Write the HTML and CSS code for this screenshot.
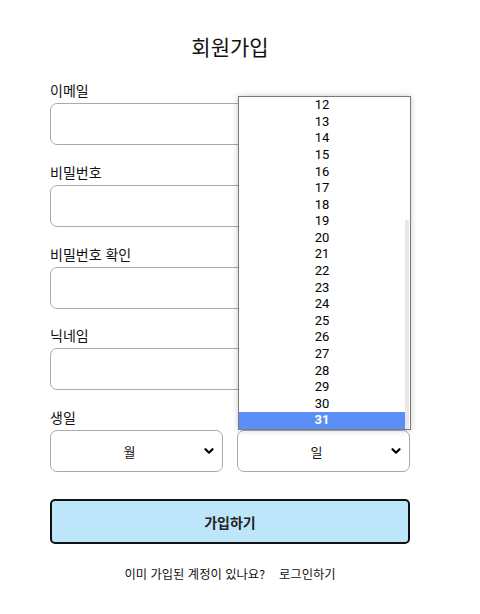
FILE: index.html
```html
<!DOCTYPE html>
<html lang="ko">
<head>
<meta charset="utf-8">
<title>회원가입</title>
<link rel="stylesheet" href="styles.css">
</head>
<body>
<main class="page">
  <h1 class="title">회원가입</h1>
  <div class="field">
    <label class="label">이메일</label>
    <div class="input"></div>
  </div>
  <div class="field">
    <label class="label">비밀번호</label>
    <div class="input"></div>
  </div>
  <div class="field">
    <label class="label">비밀번호 확인</label>
    <div class="input"></div>
  </div>
  <div class="field">
    <label class="label">닉네임</label>
    <div class="input"></div>
  </div>
  <div class="field">
    <label class="label">생일</label>
    <div class="selects">
      <div class="select"><span class="select-text">월</span><svg class="chev" viewBox="0 0 10 10" width="10" height="10"><path d="M1.5 3.2 L5 6.7 L8.5 3.2" fill="none" stroke="#000" stroke-width="2.2" stroke-linecap="round" stroke-linejoin="round"/></svg></div>
      <div class="select day"><span class="select-text">일</span><svg class="chev" viewBox="0 0 10 10" width="10" height="10"><path d="M1.5 3.2 L5 6.7 L8.5 3.2" fill="none" stroke="#000" stroke-width="2.2" stroke-linecap="round" stroke-linejoin="round"/></svg>
        <div class="listbox">
          <div class="options">
            <div class="opt">12</div><div class="opt">13</div><div class="opt">14</div><div class="opt">15</div>
            <div class="opt">16</div><div class="opt">17</div><div class="opt">18</div><div class="opt">19</div>
            <div class="opt">20</div><div class="opt">21</div><div class="opt">22</div><div class="opt">23</div>
            <div class="opt">24</div><div class="opt">25</div><div class="opt">26</div><div class="opt">27</div>
            <div class="opt">28</div><div class="opt">29</div><div class="opt">30</div><div class="opt sel">31</div>
          </div>
          <div class="scrollbar"><div class="thumb"></div></div>
        </div>
      </div>
    </div>
  </div>
  <button class="submit">가입하기</button>
  <p class="footer"><span>이미 가입된 계정이 있나요?</span><span>로그인하기</span></p>
</main>
</body>
</html>
```
FILE: styles.css
```css
* { box-sizing: border-box; }
html, body { margin: 0; padding: 0; background: #fff; }
body {
  font-family: "Noto Sans CJK KR", "Noto Sans", sans-serif;
  color: #111;
}
.page {
  width: 360px;
  margin-left: 50px;
  padding-top: 31px;
}
.title {
  margin: 0 0 19px;
  font-size: 21px;
  line-height: 30px;
  font-weight: 400;
  text-align: center;
}
.field {
  margin-bottom: 16.75px;
}
.label {
  display: block;
  font-size: 14px;
  line-height: 20px;
  margin-bottom: 3px;
}
.input {
  height: 42px;
  border: 1px solid #a9a9b4;
  border-radius: 7px;
  background: #fff;
}
.selects {
  display: flex;
  gap: 14px;
}
.select {
  position: relative;
  flex: 1;
  height: 42px;
  border: 1px solid #a9a9b4;
  border-radius: 7px;
  display: flex;
  align-items: center;
  padding: 0 8px 0 0;
}
.select-text {
  flex: 1;
  text-align: center;
  font-size: 13px;
  padding-left: 4px;
}
.chev { display: block; }
.listbox {
  position: absolute;
  left: 0;
  bottom: 41px;
  width: 173px;
  height: 334px;
  border: 1px solid #7a7a7a;
  background: #fff;
  box-shadow: 0 0 6px rgba(0,0,0,0.22);
  display: flex;
}
.options {
  flex: 1;
  display: flex;
  flex-direction: column;
  justify-content: flex-end;
}
.opt {
  height: 16.6px;
  line-height: 16.6px;
  text-align: center;
  font-family: "Roboto", "Liberation Sans", sans-serif;
  font-size: 13px;
  color: #000;
}
.opt.sel {
  background: #5b8ff5;
  color: #fff;
  font-weight: 700;
}
.scrollbar {
  width: 5px;
  display: flex;
  flex-direction: column;
  justify-content: flex-end;
}
.thumb {
  height: 209px;
  width: 4px;
  background: #e8e8e8;
}
.submit {
  display: block;
  width: 100%;
  height: 45px;
  margin-top: 27px;
  background: #bee6fb;
  border: 2px solid #111;
  border-radius: 5px;
  font-family: "Noto Sans CJK KR", sans-serif;
  font-size: 14px;
  font-weight: 700;
  color: #222;
}
.footer {
  margin: 20px 0 0;
  display: flex;
  justify-content: center;
  gap: 14px;
  font-size: 12.3px;
  line-height: 20px;
}
```
